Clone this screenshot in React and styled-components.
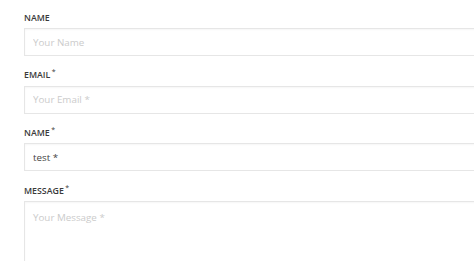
import React from "react";
import styled, { createGlobalStyle } from "styled-components";

const Global = createGlobalStyle`
  html, body { margin: 0; padding: 0; background: #fff; }
  body { font-family: "Open Sans", "Noto Sans", sans-serif; }
`;

const Page = styled.div`
  width: 100vw;
  height: 100vh;
  overflow: hidden;
`;

const Form = styled.form`
  display: flex;
  flex-direction: column;
  gap: 13.2px;
  padding: 11.5px 0 0 24px;
  width: 500px;
`;

const Field = styled.div`
  display: flex;
  flex-direction: column;
`;

const Label = styled.label`
  font-size: 8.8px;
  line-height: 12px;
  font-weight: 600;
  color: #3a3a3a;
  text-transform: uppercase;
  margin-bottom: 4.5px;
`;

const Req = styled.sup`
  font-size: 7px;
  margin-left: 1.5px;
  line-height: 0;
  font-weight: 400;
`;

const inputBase = `
  box-sizing: border-box;
  width: 100%;
  border: 1px solid #e6e6e6;
  box-shadow: inset 0 1px 2px rgba(0, 0, 0, 0.04);
  background: #fff;
  font-family: "Open Sans", "Noto Sans", sans-serif;
  font-size: 9.8px;
  color: #444;
  padding: 0 8px;
  outline: none;
  &::placeholder { color: #cbcbcb; }
`;

const Input = styled.input`
  ${inputBase}
  height: 28px;
`;

const TextArea = styled.textarea`
  ${inputBase}
  height: 90px;
  padding-top: 9px;
  resize: none;
`;

const fields = [
  { label: "Name", required: false, placeholder: "Your Name" },
  { label: "Email", required: true, placeholder: "Your Email *" },
  { label: "Name", required: true, placeholder: "", value: "test *" },
];

export default function App() {
  return (
    <Page>
      <Global />
      <Form>
        {fields.map((f, i) => (
          <Field key={i}>
            <Label>
              {f.label}
              {f.required && <Req>*</Req>}
            </Label>
            <Input placeholder={f.placeholder} defaultValue={f.value} />
          </Field>
        ))}
        <Field>
          <Label>
            Message<Req>*</Req>
          </Label>
          <TextArea placeholder="Your Message *" />
        </Field>
      </Form>
    </Page>
  );
}
